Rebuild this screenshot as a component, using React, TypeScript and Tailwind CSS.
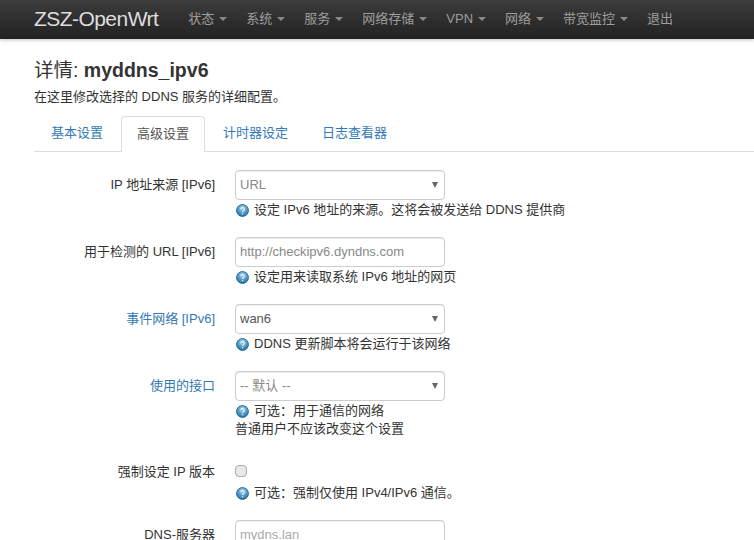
import type { ReactNode } from "react";

const font = "font-['Liberation_Sans','Noto_Sans_CJK_SC',sans-serif]";

const navItems = [
  { label: "状态", caret: true },
  { label: "系统", caret: true },
  { label: "服务", caret: true },
  { label: "网络存储", caret: true },
  { label: "VPN", caret: true },
  { label: "网络", caret: true },
  { label: "带宽监控", caret: true },
  { label: "退出", caret: false },
];

function HelpIcon() {
  return (
    <svg width="13" height="13" viewBox="0 0 14 14" className="ml-px shrink-0">
      <defs>
        <radialGradient id="help" cx="50%" cy="30%" r="70%">
          <stop offset="0%" stopColor="#a8d4ee" />
          <stop offset="100%" stopColor="#1b6fa3" />
        </radialGradient>
      </defs>
      <circle cx="7" cy="7" r="6.4" fill="url(#help)" stroke="#1c6a99" strokeWidth="1" />
      <path d="M5.1 5.6a1.9 1.9 0 1 1 2.9 1.6c-.7.4-1 .7-1 1.4" fill="none" stroke="#e8f4fb" strokeWidth="1.2" />
      <circle cx="7" cy="10.5" r="0.8" fill="#e8f4fb" />
    </svg>
  );
}

function Help({ children }: { children: ReactNode }) {
  return (
    <div className="flex h-5 items-center gap-[5px] text-[13px] text-[#333]">
      <HelpIcon />
      <span>{children}</span>
    </div>
  );
}

function Select({ value, muted }: { value: string; muted?: boolean }) {
  return (
    <div
      className={`flex h-[30px] w-[210px] items-center justify-between rounded border border-[#ccc] bg-white pl-1 pr-[6px] text-[13px] shadow-[inset_0_1px_1px_rgba(0,0,0,0.075)] ${
        muted ? "text-[#888]" : "text-[#555]"
      }`}
    >
      <span>{value}</span>
      <span className="border-x-[3px] border-t-[6px] border-x-transparent border-t-[#666]" />
    </div>
  );
}

function TextInput({ placeholder, light }: { placeholder: string; light?: boolean }) {
  return (
    <div
      className={`flex h-[30px] w-[210px] items-center rounded border border-[#ccc] bg-white px-1 text-[13px] shadow-[inset_0_1px_1px_rgba(0,0,0,0.075)] ${
        light ? "text-[#aaa]" : "text-[#888]"
      }`}
    >
      {placeholder}
    </div>
  );
}

function Row({
  label,
  link,
  className,
  children,
}: {
  label: string;
  link?: boolean;
  className?: string;
  children: ReactNode;
}) {
  return (
    <div className={`flex gap-5 ${className ?? ""}`}>
      <div className={`w-[181px] pt-[6px] text-right text-[13px] leading-[18px] ${link ? "text-[#337ab7]" : "text-[#333]"}`}>
        {label}
      </div>
      <div>{children}</div>
    </div>
  );
}

export default function App() {
  return (
    <div className={`h-[540px] w-[754px] overflow-hidden bg-white ${font}`}>
      {/* 顶部导航 */}
      <nav className="flex h-[39px] items-center bg-gradient-to-b from-[#3c3c3c] to-[#222] pb-[2px] pl-[34px] shadow-[0_1px_4px_rgba(0,0,0,0.25)]">
        <span className="mr-[30px] text-[21px] tracking-[-0.55px] text-[#ddd]">ZSZ-OpenWrt</span>
        <div className="flex gap-[19px] text-[13px] text-[#9d9d9d]">
          {navItems.map((item) => (
            <span key={item.label} className="flex items-center gap-[5px]">
              {item.label}
              {item.caret && <span className="mt-px border-x-4 border-t-4 border-x-transparent border-t-[#8a8a8a]" />}
            </span>
          ))}
        </div>
      </nav>

      <main className="pl-[34px] pt-[18px]">
        <h2 className="text-[19.5px] leading-[26px] text-[#333]">
          详情: <b>myddns_ipv6</b>
        </h2>
        <p className="mt-[5px] text-[13px] leading-[18px] text-[#333]">在这里修改选择的 DDNS 服务的详细配置。</p>

        {/* 标签页 */}
        <div className="mt-[10px] flex h-[36px] border-b border-[#ddd] text-[13px] text-[#337ab7]">
          <span className="pl-[17px] pr-[18px] pt-[7px]">基本设置</span>
          <span className="mb-[-1px] h-[36px] rounded-t border border-b-0 border-[#ddd] bg-white px-[15px] pt-[7px] text-[#555]">高级设置</span>
          <span className="pl-[18px] pt-[7px]">计时器设定</span>
          <span className="pl-[34px] pt-[7px]">日志查看器</span>
        </div>

        <div className="mt-[18px]">
          <Row label="IP 地址来源 [IPv6]">
            <Select value="URL" muted />
            <Help>设定 IPv6 地址的来源。这将会被发送给 DDNS 提供商</Help>
          </Row>
          <Row label="用于检测的 URL [IPv6]" className="mt-[17px]">
            <TextInput placeholder="http://checkipv6.dyndns.com" />
            <Help>设定用来读取系统 IPv6 地址的网页</Help>
          </Row>
          <Row label="事件网络 [IPv6]" link className="mt-[17px]">
            <Select value="wan6" />
            <Help>DDNS 更新脚本将会运行于该网络</Help>
          </Row>
          <Row label="使用的接口" link className="mt-[17px]">
            <Select value="-- 默认 --" muted />
            <Help>可选：用于通信的网络</Help>
            <div className="text-[13px] leading-[15px] text-[#333]">普通用户不应该改变这个设置</div>
          </Row>
          <Row label="强制设定 IP 版本" className="mt-[21px]">
            <div className="flex h-[24px] items-center pt-[3px]">
              <span className="h-3 w-3 rounded-sm border border-[#aaa] bg-[#e8e8e8]" />
            </div>
            <div className="mt-[2px]">
              <Help>可选：强制仅使用 IPv4/IPv6 通信。</Help>
            </div>
          </Row>
          <Row label="DNS-服务器" className="mt-[17px]">
            <TextInput placeholder="mydns.lan" light />
          </Row>
        </div>
      </main>
    </div>
  );
}
